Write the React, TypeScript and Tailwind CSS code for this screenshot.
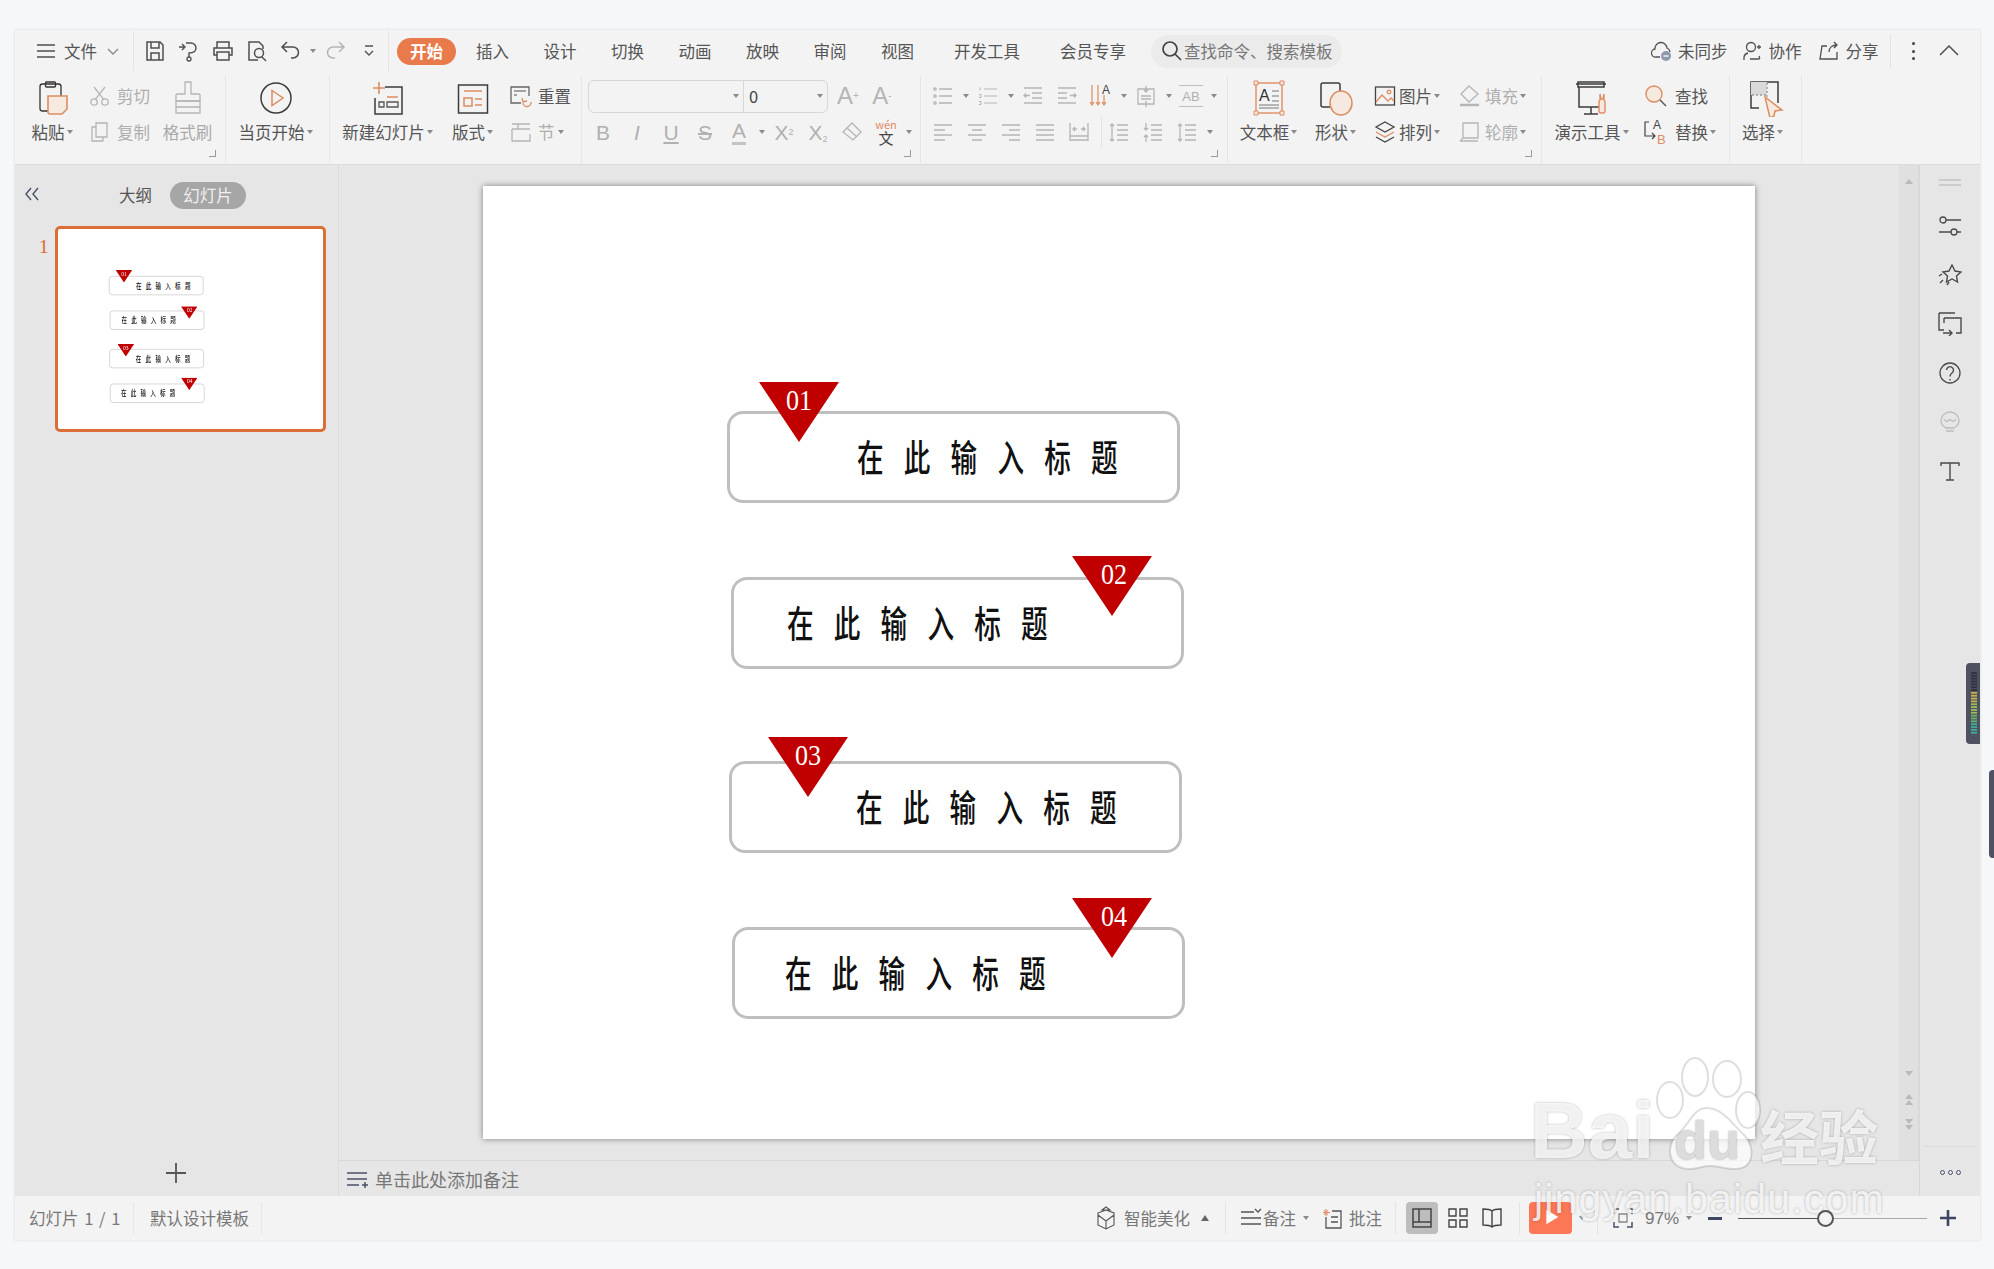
import React from 'react';
import clsx from 'clsx';

const dark = '#4f4f4f';
const org = '#dd8d62';
const dis = '#b5b5b5';
const slate = '#4a5068';

function Ic({ s = 20, h, c = dark, sw = 1.3, children }: { s?: number; h?: number; c?: string; sw?: number; children?: React.ReactNode }) {
  return (
    <svg width={s} height={h ?? s} viewBox={`0 0 ${s} ${h ?? s}`} fill="none" stroke={c} strokeWidth={sw} className="shrink-0">
      {children}
    </svg>
  );
}

function Caret({ className }: { className?: string }) {
  return (
    <span className={clsx('flex w-[8px] shrink-0 justify-center', className)}>
      <span className="h-0 w-0 border-x-[3.5px] border-t-[4px] border-x-transparent border-t-[#8a8a8a]" />
    </span>
  );
}

function Box({ w = 'w-[34px]', children }: { w?: string; children?: React.ReactNode }) {
  return <div className={clsx('flex h-full shrink-0 items-center justify-center', w)}>{children}</div>;
}

function Corner() {
  return <div className="absolute bottom-[6px] right-[9px] h-[7px] w-[7px] border-b border-r border-[#9a9a9a]" />;
}

function Row({ className, children }: { className?: string; children?: React.ReactNode }) {
  return <div className={clsx('flex h-[36px] items-center', className)}>{children}</div>;
}

// big ribbon button: drawing above, label below
function Big({ className, icon, label, caret, dim }: { className: string; icon: React.ReactNode; label: string; caret?: boolean; dim?: boolean }) {
  return (
    <div className={clsx('shrink-0', className)}>
      <Row className="justify-center pt-[3px]">{icon}</Row>
      <Row className={clsx('justify-center', dim && 'text-[#a9a9a9]')}>
        <Lbl text={label} caret={caret} />
      </Row>
    </div>
  );
}

function Group({ w, children }: { w: string; children?: React.ReactNode }) {
  return <div className={clsx('relative flex h-[87px] shrink-0 border-r border-[#e6e6e6] pt-[2px]', w)}>{children}</div>;
}

function Lbl({ text, caret }: { text: string; caret?: boolean }) {
  return (
    <span className="flex items-center whitespace-nowrap">
      {text}
      {caret && <Caret className="ml-[1px]" />}
    </span>
  );
}

/* ---------- ribbon drawings ---------- */
const PasteIcon = () => (
  <Ic s={36}>
    <rect x="5" y="4" width="21" height="27" rx="2.5" stroke="#333" />
    <rect x="10.5" y="2" width="10" height="5" rx="1" stroke="#333" />
    <path d="M13 16h19v13l-5 5H15a2 2 0 0 1-2-2z" fill="#f6e9df" stroke={org} strokeWidth="1.6" />
  </Ic>
);
const ScissorIcon = () => (
  <Ic s={22} c={dis}>
    <circle cx="5" cy="17" r="3.2" />
    <circle cx="16" cy="17" r="3.2" />
    <path d="M6.5 14.2 16 2M14.5 14.2 5 2" />
  </Ic>
);
const CopyIcon = () => (
  <Ic s={22} c={dis}>
    <path d="M7 2h11v14H7zM7 6H3v14h11v-4" />
  </Ic>
);
const BrushIcon = () => (
  <Ic s={30} h={36} c={dis}>
    <path d="M12 2h6v12h8a1 1 0 0 1 1 1v6H3v-6a1 1 0 0 1 1-1h8z" />
    <path d="M3 21h24v12H3zM3 27h24" />
  </Ic>
);
const PlayIcon = () => (
  <Ic s={34}>
    <circle cx="17" cy="17" r="15" stroke="#3c3c3c" strokeWidth="1.5" />
    <path d="M13 9.5 24 17l-11 7.5z" stroke={org} strokeWidth="1.5" />
  </Ic>
);
const NewSlideIcon = () => (
  <Ic s={34}>
    <path d="M14 6h17v27H4V17" stroke="#3c3c3c" strokeWidth="1.5" />
    <path d="M8 1v12M2 7h12M16 16h11" stroke={org} strokeWidth="1.6" />
    <path d="M8 21h5v5H8zM16 21h11v5H16z" stroke="#555" />
  </Ic>
);
const LayoutIcon = () => (
  <Ic s={32}>
    <rect x="1.5" y="3" width="29" height="28" stroke="#3c3c3c" strokeWidth="1.5" />
    <path d="M7 9h18M7 16h8v8H7zM18 17h7M18 23h7" stroke={org} strokeWidth="1.5" />
  </Ic>
);
const ResetIcon = () => (
  <Ic s={24}>
    <path d="M12 19H2V3h18v9" stroke="#666" />
    <path d="M5 7h12M5 11h3" stroke="#888" />
    <path d="M22 18a4 4 0 0 1-8 1M13 14l1 4 4-1" stroke={org} />
  </Ic>
);
const SectionIcon = () => (
  <Ic s={22} c={dis}>
    <path d="M2 3h18M2 8h18M2 8v12h18V13M8 3v5" />
  </Ic>
);
const TextBoxIcon = () => (
  <svg width="32" height="36" viewBox="0 0 32 36" fill="none" className="shrink-0">
    <rect x="3" y="3" width="26" height="30" stroke={org} strokeWidth="1.4" />
    <path d="M1 1h4v4H1zM27 1h4v4h-4zM1 31h4v4H1zM27 31h4v4h-4z" fill="#f6e9df" stroke={org} />
    <text x="6" y="21" fontSize="16" fill="#333" fontFamily="Liberation Sans">A</text>
    <path d="M19 11h7M19 16h7M19 21h7M6 25h20M6 28h20" stroke="#777" />
  </svg>
);
const ShapeIcon = () => (
  <Ic s={36}>
    <path d="M13 27H5a2 2 0 0 1-2-2V5a2 2 0 0 1 2-2h15a2 2 0 0 1 2 2v7" stroke="#3c3c3c" strokeWidth="1.5" />
    <ellipse cx="23" cy="23" rx="11" ry="12" fill="#f6e9df" stroke={org} strokeWidth="1.5" />
  </Ic>
);
const PictureIcon = () => (
  <Ic s={22}>
    <rect x="1.5" y="2" width="19" height="18" stroke="#444" />
    <path d="M2 17 8 10l6 6 3-3 3 3" stroke={org} />
    <circle cx="15" cy="7" r="1.8" stroke={org} />
  </Ic>
);
const FillIcon = () => (
  <Ic s={22} c={dis}>
    <path d="M11 1 20 9l-9 8-8-8z" />
    <path d="M2 20h19" strokeWidth="2.5" />
  </Ic>
);
const LayersIcon = () => (
  <Ic s={22}>
    <path d="M11 1 20 6l-9 5-9-5z" stroke="#444" />
    <path d="m2 11 9 5 9-5" stroke={org} />
    <path d="m2 16 9 5 9-5" stroke="#444" />
  </Ic>
);
const OutlineIcon = () => (
  <Ic s={22} c={dis}>
    <path d="M5 2h15v15H5zM2 20h18M5 17l-3 3" />
  </Ic>
);
const ProjectorIcon = () => (
  <Ic s={36}>
    <path d="M2 4h30M4 2h26v5H4zM5 7v20h20M17 27v7M10 34h14" stroke="#3c3c3c" strokeWidth="1.5" />
    <path d="M26 14v6a3 3 0 0 0-1 2v9a2 2 0 0 0 2 2h2a2 2 0 0 0 2-2v-9a3 3 0 0 0-1-2v-6l-1 5h-2z" stroke={org} fill="#f6e9df" strokeWidth="1.4" />
  </Ic>
);
const FindIcon = () => (
  <Ic s={24}>
    <circle cx="10" cy="10" r="8" fill="#f6e9df" stroke={org} strokeWidth="1.4" />
    <path d="m16 16 6 6" stroke="#555" strokeWidth="1.4" />
  </Ic>
);
const ReplaceIcon = () => (
  <svg width="24" height="26" viewBox="0 0 24 26" fill="none" className="shrink-0">
    <text x="9" y="10" fontSize="12" fill="#444" fontFamily="Liberation Sans">A</text>
    <text x="13" y="25" fontSize="13" fill={org} fontFamily="Liberation Sans">B</text>
    <path d="M5 3H1v14h10m-3-3 3 3-3 3" stroke="#444" strokeWidth="1.2" />
  </svg>
);
const SelectIcon = () => (
  <span className="ml-[8px]">
    <Ic s={38}>
      <path d="M30 24V3H3v26h8" stroke="#3c3c3c" strokeWidth="1.5" />
      <path d="M3 3h16v13H3z" fill="#d9d9d9" stroke="none" />
      <path d="M19 4v14M4 16h14" stroke="#999" strokeDasharray="2 2" />
      <path d="m17 18 17 13-7 1-1 5-4 2z" fill="#f6e9df" stroke={org} strokeWidth="1.5" />
    </Ic>
  </span>
);

const lines = (d: string) => (
  <Ic s={22} c={dis}>
    <path d={d} />
  </Ic>
);

const BulletIcon = () => (
  <Ic s={22} c={dis}>
    <path d="M7 4h13M7 11h13M7 18h13" />
    <circle cx="3" cy="4" r="1.2" />
    <circle cx="3" cy="11" r="1.2" />
    <circle cx="3" cy="18" r="1.2" />
  </Ic>
);
const NumberIcon = () => (
  <Ic s={22} c={dis}>
    <path d="M7 4h13M7 11h13M7 18h13M3 2.5v3M2 9.5h2v3H2M2 16.5h2v3H2" strokeWidth="1" />
  </Ic>
);
const SortIcon = () => (
  <svg width="24" height="26" viewBox="0 0 24 26" fill="none" className="shrink-0">
    <path d="M3 2v20m-2-3 2 3 2-3M9 2v20m-2-3 2 3 2-3M15 12v10m-2-3 2 3 2-3" stroke={org} strokeWidth="1.2" />
    <text x="13" y="11" fontSize="12" fill="#444" fontFamily="Liberation Sans">A</text>
  </svg>
);

/* ---------- slide ---------- */
const cards = [
  { n: '01', box: 'left-[244px] top-[225px]', tri: 'left-[276px] top-[196px]', text: 'left-[127px]', num: 'pl-0' },
  { n: '02', box: 'left-[248px] top-[391px]', tri: 'left-[589px] top-[370px]', text: 'left-[53px]', num: 'pl-[4px]' },
  { n: '03', box: 'left-[246px] top-[575px]', tri: 'left-[285px] top-[551px]', text: 'left-[124px]', num: 'pl-0' },
  { n: '04', box: 'left-[249px] top-[741px]', tri: 'left-[589px] top-[712px]', text: 'left-[50px]', num: 'pl-[4px]' },
];

function SlideCards() {
  return (
    <>
      {cards.map((c) => (
        <React.Fragment key={c.n}>
          <div className={clsx('absolute h-[92px] w-[453px] rounded-[16px] border-[3px] border-[#bfbfbf] bg-white', c.box)}>
            <span
              className={clsx(
                "absolute top-[17px] origin-left scale-x-[0.72] whitespace-nowrap text-[37px] font-medium leading-[50px] tracking-[28px] text-[#111] font-['Noto_Sans_CJK_SC',sans-serif]",
                c.text,
              )}
            >
              在此输入标题
            </span>
          </div>
          <div
            className={clsx(
              "absolute flex h-[60px] w-[80px] justify-center bg-[#c00000] text-[30px] leading-[36px] text-white [clip-path:polygon(0_0,100%_0,50%_100%)] font-['Liberation_Serif',serif]",
              c.tri,
              c.num,
            )}
          >
            <span className="inline-block scale-x-[0.87]">{c.n}</span>
          </div>
        </React.Fragment>
      ))}
    </>
  );
}

function Watermark() {
  const glow = 'text-white/80 [text-shadow:0_0_3px_rgba(0,0,0,0.28)]';
  return (
    <div className="pointer-events-none absolute left-[1530px] top-[1050px] h-[170px] w-[360px]">
      <span className={clsx("absolute left-0 top-[36px] text-[80px] font-bold leading-[90px] font-['Liberation_Sans',sans-serif]", glow)}>Bai</span>
      <svg width="110" height="125" viewBox="0 0 110 125" className="absolute left-[125px] top-[3px]" fill="rgba(255,255,255,0.7)" stroke="rgba(0,0,0,0.13)" strokeWidth="2">
        <ellipse cx="15" cy="47" rx="13" ry="18" />
        <ellipse cx="40" cy="24" rx="13" ry="19" />
        <ellipse cx="72" cy="26" rx="14" ry="18" />
        <ellipse cx="93" cy="57" rx="12" ry="18" />
        <path d="M52 55c-14 0-17 16-30 27-12 11-9 34 12 34 9 0 13-3 21-3s16 3 25 3c20 0 20-22 10-33C78 72 68 55 52 55z" />
      </svg>
      <span className="absolute left-[144px] top-[62px] text-[54px] font-bold leading-[56px] text-[#dcdcdc] [text-shadow:0_0_2px_rgba(0,0,0,0.35)] font-['Liberation_Sans',sans-serif]">du</span>
      <span className={clsx("absolute left-[230px] top-[50px] text-[59px] font-bold leading-[70px] font-['Noto_Sans_CJK_SC',sans-serif]", glow)}>经验</span>
      <span className={clsx("absolute left-[4px] top-[126px] text-[41px] leading-[46px] tracking-[1.2px] font-['Liberation_Sans',sans-serif]", glow)}>jingyan.baidu.com</span>
    </div>
  );
}

function RailIcon({ children }: { children: React.ReactNode }) {
  return <div className="flex h-[49px] items-center justify-center">{children}</div>;
}

function Divider({ className }: { className?: string }) {
  return <div className={clsx('w-px shrink-0 bg-[#e4e4e4]', className)} />;
}

export default function App() {
  return (
    <div className="relative h-[1269px] w-[1994px] overflow-hidden whitespace-nowrap bg-[#f6f7f9] pl-[15px] pt-[30px] text-[16.5px] leading-none text-[#555] font-['Noto_Sans_CJK_SC','Liberation_Sans',sans-serif]">
      <div className="flex h-[1210px] w-[1965px] flex-col shadow-[0_0_3px_rgba(0,0,0,0.12)]">
        {/* title row with the tabs */}
        <div className="flex h-[46px] shrink-0 items-center bg-[#f3f3f3] pb-[4px]">
          <div className="flex w-[118px] shrink-0 items-center pl-[21px]">
            <Ic s={20}>
              <path d="M1 4h18M1 10h18M1 16h18" strokeWidth="1.5" />
            </Ic>
            <span className="ml-[8px]">文件</span>
            <span className="ml-[10px]">
              <Ic s={12} c="#888">
                <path d="m1 4 5 5 5-5" />
              </Ic>
            </span>
          </div>
          <Divider className="h-[40px]" />
          <div className="ml-[4px] flex h-[34px] items-center">
            <Box>
              <Ic s={22}>
                <path d="M3 2h13l3 3v15H3zM7 2v6h8V2M7 20v-7h8v7" strokeWidth="1.5" />
              </Ic>
            </Box>
            <Box>
              <Ic s={22}>
                <path d="M8 3h5a5 5 0 0 1 5 5c0 4-4 5-7 5v4M1 7h5m-2-3 3 3-3 3" strokeWidth="1.4" />
                <circle cx="11" cy="19" r="2" />
              </Ic>
            </Box>
            <Box>
              <Ic s={22}>
                <path d="M5 8V2h12v6M5 15H2V8h18v7h-3M5 12h12v8H5z" strokeWidth="1.5" />
              </Ic>
            </Box>
            <Box>
              <Ic s={22}>
                <path d="M12 20H3V2h10l4 4v3" strokeWidth="1.5" />
                <circle cx="13" cy="13" r="4.5" strokeWidth="1.5" />
                <path d="m16 17 4 4" strokeWidth="1.5" />
              </Ic>
            </Box>
            <Box>
              <Ic s={22}>
                <path d="M7 2 2 7l5 5M2 7h11a5 5 0 0 1 0 11h-2" strokeWidth="1.5" />
              </Ic>
            </Box>
            <Caret className="w-[10px]" />
            <Box>
              <Ic s={22} c={dis}>
                <path d="m15 2 5 5-5 5M20 7H9a5 5 0 0 0 0 11h2" strokeWidth="1.5" />
              </Ic>
            </Box>
            <Box>
              <Ic s={14} c="#555">
                <path d="M3 2h8M3 7l4 4 4-4" strokeWidth="1.4" />
              </Ic>
            </Box>
          </div>
          <Divider className="ml-[2px] h-[40px]" />
          <div className="ml-[8px] flex h-[27px] w-[59px] shrink-0 items-center justify-center rounded-full bg-[#e87a4b] font-bold text-white">开始</div>
          <span className="ml-[20px]">插入</span>
          <span className="ml-[34.5px]">设计</span>
          <span className="ml-[34.5px]">切换</span>
          <span className="ml-[34.5px]">动画</span>
          <span className="ml-[34.5px]">放映</span>
          <span className="ml-[34.5px]">审阅</span>
          <span className="ml-[34.5px]">视图</span>
          <span className="ml-[40px]">开发工具</span>
          <span className="ml-[40px]">会员专享</span>
          <div className="ml-[25px] flex h-[33px] w-[191px] shrink-0 items-center rounded-full bg-[#ebebeb] pl-[10px] text-[#777]">
            <Ic s={22} c="#444">
              <circle cx="9" cy="9" r="7" strokeWidth="1.7" />
              <path d="m14 14 6 6" strokeWidth="1.7" />
            </Ic>
            <span className="ml-[1px] whitespace-nowrap text-[16.5px]">查找命令、搜索模板</span>
          </div>
          <div className="ml-[309px] flex items-center">
            <Ic s={22}>
              <path d="M9 17H5a4 4 0 0 1-1-8 6 6 0 0 1 12-1 5 5 0 0 1 3 4" />
              <circle cx="15" cy="16" r="5" fill="#8f99ad" stroke="none" />
              <path d="M12.5 16h5" stroke="#fff" />
            </Ic>
            <span className="ml-[5px]">未同步</span>
            <span className="ml-[14px]">
              <Ic s={20}>
                <circle cx="9" cy="6" r="4.5" />
                <path d="M2 19v-3a5 5 0 0 1 4-4M8 18h8c2 0 2-1 1-3M15 6h4M17 4v4" />
              </Ic>
            </span>
            <span className="ml-[7px]">协作</span>
            <span className="ml-[16px]">
              <Ic s={22}>
                <path d="M9 6H4L2 19h17V12M11 12c0-4 3-7 8-7m-3-3 3 3-3 3" />
              </Ic>
            </span>
            <span className="ml-[6px]">分享</span>
            <Divider className="ml-[11px] h-[34px]" />
            <div className="ml-[20px] flex h-[22px] w-[6px] flex-col items-center justify-between py-[2px]">
              <span className="h-[3px] w-[3px] rounded-full bg-[#444]" />
              <span className="h-[3px] w-[3px] rounded-full bg-[#444]" />
              <span className="h-[3px] w-[3px] rounded-full bg-[#444]" />
            </div>
            <span className="ml-[22px]">
              <Ic s={20}>
                <path d="m1 14 9-9 9 9" strokeWidth="1.5" />
              </Ic>
            </span>
          </div>
        </div>

        {/* ribbon */}
        <div className="flex h-[89px] shrink-0 border-b border-[#dcdcdc] bg-[#f3f3f3] text-[#555]">
          <Group w="w-[211px]">
            <Big className="ml-[11px] w-[53px]" icon={<PasteIcon />} label="粘贴" caret />
            <div className="ml-[8px] w-[73px] shrink-0 text-[#aeaeae]">
              <Row><Box w="w-[26px]"><ScissorIcon /></Box><span className="ml-[4px]">剪切</span></Row>
              <Row><Box w="w-[26px]"><CopyIcon /></Box><span className="ml-[4px]">复制</span></Row>
            </div>
            <Big className="ml-[3px] w-[49px]" icon={<BrushIcon />} label="格式刷" dim />
            <Corner />
          </Group>

          <Group w="w-[104px]">
            <Big className="ml-[12px] w-[76px]" icon={<PlayIcon />} label="当页开始" caret />
          </Group>

          <Group w="w-[252px]">
            <Big className="ml-[12px] w-[92px]" icon={<NewSlideIcon />} label="新建幻灯片" caret />
            <Big className="ml-[18px] w-[42px]" icon={<LayoutIcon />} label="版式" caret />
            <div className="ml-[16px] shrink-0">
              <Row><Box w="w-[22px]"><ResetIcon /></Box><span className="ml-[6px]">重置</span></Row>
              <Row className="text-[#aeaeae]"><Box w="w-[22px]"><SectionIcon /></Box><span className="ml-[6px]">节</span><Caret className="ml-[2px]" /></Row>
            </div>
          </Group>

          <Group w="w-[339px]">
            <div className="shrink-0">
              <Row className="pl-[6px]">
                <div className="flex h-[33px] w-[240px] overflow-hidden rounded-[6px] border border-[#d6d6d6]">
                  <div className="flex w-[155px] items-center justify-end border-r border-[#d6d6d6] pr-[3px]"><Caret /></div>
                  <div className="flex flex-1 items-center justify-between pl-[5px] pr-[3px] text-[#444]">0<Caret /></div>
                </div>
                <div className="ml-[3px] flex h-full text-[24px] text-[#b5b5b5] font-['Liberation_Sans',sans-serif]">
                  <Box><span>A<sup className="text-[10px]">+</sup></span></Box>
                  <Box><span>A<sup className="text-[10px]">-</sup></span></Box>
                </div>
              </Row>
              <Row className="pl-[4px] text-[21px] text-[#b0b0b0] font-['Liberation_Sans',sans-serif]">
                <Box>B</Box>
                <Box><span className="italic">I</span></Box>
                <Box><span className="underline underline-offset-2">U</span></Box>
                <Box><span className="line-through">S</span></Box>
                <Box><span className="border-b-[3px] border-[#c4c4c4] pb-[1px]">A</span></Box>
                <Caret className="w-[11px]" />
                <Box><span>X<sup className="text-[9px]">2</sup></span></Box>
                <Box><span>X<sub className="text-[9px]">2</sub></span></Box>
                <Box>
                  <Ic s={24} c={dis}>
                    <path d="m12 3 9 9-8 8-10-8zM7 8l10 9" fill="#f3f3f3" />
                  </Ic>
                </Box>
                <Box>
                  <span className="flex flex-col items-center font-['Noto_Sans_CJK_SC',sans-serif]">
                    <span className="text-[11px] leading-[11px] text-[#dd8d62]">wén</span>
                    <span className="text-[15px] leading-[15px] text-[#444]">文</span>
                  </span>
                </Box>
                <Caret className="w-[11px]" />
              </Row>
            </div>
            <Corner />
          </Group>

          <Group w="w-[307px]">
            <div className="shrink-0">
              <Row className="pl-[5px]">
                <Box><BulletIcon /></Box><Caret className="w-[11px]" />
                <Box><NumberIcon /></Box><Caret className="w-[11px]" />
                <Box>{lines('M2 3h18M10 8h10M10 13h10M2 18h18M8 10.5H2m2-2-2 2 2 2')}</Box>
                <Box>{lines('M2 3h18M2 8h9M2 13h9M2 18h18M14 10.5h6m-2-2 2 2-2 2')}</Box>
                <Box><SortIcon /></Box><Caret className="w-[11px]" />
                <Box>{lines('M3 4h16v15H3zM6 11h10M6 14h10M11 1v6m-2-2 2 2 2-2M11 22v-6')}</Box><Caret className="w-[11px]" />
                <Box>
                  <span className="flex h-[22px] w-[24px] flex-col items-center justify-center border-y border-[#bdbdbd] text-[13px] text-[#b0b0b0] font-['Liberation_Sans',sans-serif]">AB</span>
                </Box>
                <Caret className="w-[11px]" />
              </Row>
              <Row className="pl-[5px]">
                <Box>{lines('M2 4h18M2 9h11M2 14h18M2 19h11')}</Box>
                <Box>{lines('M2 4h18M6 9h10M2 14h18M6 19h10')}</Box>
                <Box>{lines('M2 4h18M9 9h11M2 14h18M9 19h11')}</Box>
                <Box>{lines('M2 4h18M2 9h18M2 14h18M2 19h18')}</Box>
                <Box>{lines('M2 2v18M20 2v18M2 15h18M2 19h18M5 8h4m-2-2-2 2 2 2M17 8h-4m2-2 2 2-2 2')}</Box>
                <Divider className="ml-[5px] h-[30px] bg-[#dedede]" />
                <Box>{lines('M9 4h11M9 9h11M9 14h11M9 19h11M4 3v17M2 5l2-2 2 2M2 18l2 2 2-2')}</Box>
                <Box>{lines('M9 4h11M9 9h11M9 14h11M9 19h11M4 2v7M4 14v7M2 7l2 2 2-2M2 16l2-2 2 2')}</Box>
                <Box>{lines('M9 4h11M9 9h11M9 14h11M9 19h11M4 3v17M2 5l2-2 2 2M2 18l2 2 2-2')}</Box>
                <Caret className="w-[11px]" />
              </Row>
            </div>
            <Corner />
          </Group>

          <Group w="w-[314px]">
            <Big className="ml-[12px] w-[58px]" icon={<TextBoxIcon />} label="文本框" caret />
            <Big className="ml-[17px] w-[42px]" icon={<ShapeIcon />} label="形状" caret />
            <div className="ml-[17px] w-[84px] shrink-0">
              <Row><Box w="w-[22px]"><PictureIcon /></Box><span className="ml-[3px]"><Lbl text="图片" caret /></span></Row>
              <Row><Box w="w-[22px]"><LayersIcon /></Box><span className="ml-[3px]"><Lbl text="排列" caret /></span></Row>
            </div>
            <div className="text-[#aeaeae]">
              <Row><Box w="w-[22px]"><FillIcon /></Box><span className="ml-[5px]"><Lbl text="填充" caret /></span></Row>
              <Row><Box w="w-[22px]"><OutlineIcon /></Box><span className="ml-[5px]"><Lbl text="轮廓" caret /></span></Row>
            </div>
            <Corner />
          </Group>

          <Group w="w-[188px]">
            <Big className="ml-[11px] w-[78px]" icon={<ProjectorIcon />} label="演示工具" caret />
            <div className="ml-[13px] shrink-0">
              <Row><Box w="w-[24px]"><FindIcon /></Box><span className="ml-[7px]">查找</span></Row>
              <Row><Box w="w-[24px]"><ReplaceIcon /></Box><span className="ml-[7px]"><Lbl text="替换" caret /></span></Row>
            </div>
          </Group>

          <Group w="w-[72px]">
            <Big className="ml-[12px] w-[42px]" icon={<SelectIcon />} label="选择" caret />
          </Group>
        </div>

        {/* workspace */}
        <div className="flex min-h-0 flex-1 bg-[#e6e6e6]">
          <div className="flex w-[324px] shrink-0 flex-col border-r border-[#dcdcdc]">
            <div className="relative flex h-[61px] shrink-0 items-start pt-[17px]">
              <span className="absolute left-[9px] top-[21px]">
                <Ic s={16} c="#4a5068">
                  <path d="M7 2 2 8l5 6M14 2 9 8l5 6" strokeWidth="1.4" />
                </Ic>
              </span>
              <span className="ml-[104px] flex h-[27px] items-center text-[#555]">大纲</span>
              <div className="ml-[18px] flex h-[27px] w-[76px] items-center justify-center rounded-full bg-[#a6a6a6] text-[#f0f0f0]">幻灯片</div>
            </div>
            <div className="flex flex-1 pt-0">
              <span className="ml-[24px] mt-[11px] w-[16px] text-[19px] text-[#d9692e] font-['Liberation_Serif',serif]">1</span>
              <div className="relative h-[206px] w-[271px] overflow-hidden rounded-[5px] border-[3px] border-[#dc6f36] bg-white">
                <div className="absolute left-0 top-0 h-[953px] w-[1272px] origin-top-left scale-[0.2087]">
                  <SlideCards />
                </div>
              </div>
            </div>
            <div className="flex h-[47px] shrink-0 items-end justify-center pb-[12px] pr-[2px]">
              <Ic s={22} c="#555">
                <path d="M11 1v20M1 11h20" strokeWidth="1.8" />
              </Ic>
            </div>
          </div>

          <div className="flex min-w-0 flex-1 flex-col">
            <div className="flex min-h-0 flex-1">
              <div className="min-w-0 flex-1 pl-[144px] pt-[21px]">
                <div className="relative h-[953px] w-[1272px] bg-white shadow-[0_0_6px_rgba(0,0,0,0.45)]">
                  <SlideCards />
                </div>
              </div>
              <div className="flex w-[20px] shrink-0 flex-col items-center border-r border-[#d8d8d8] bg-[#e0e0e0] pt-[14px]">
                <span className="h-0 w-0 border-x-[4px] border-b-[5px] border-x-transparent border-b-[#b9b9b9]" />
                <span className="mt-auto h-0 w-0 border-x-[4px] border-t-[5px] border-x-transparent border-t-[#b9b9b9]" />
                <span className="mt-[18px] flex flex-col gap-[1px]">
                  <span className="h-0 w-0 border-x-[4px] border-b-[5px] border-x-transparent border-b-[#b9b9b9]" />
                  <span className="h-0 w-0 border-x-[4px] border-b-[5px] border-x-transparent border-b-[#b9b9b9]" />
                </span>
                <span className="mb-[30px] mt-[14px] flex flex-col gap-[1px]">
                  <span className="h-0 w-0 border-x-[4px] border-t-[5px] border-x-transparent border-t-[#b9b9b9]" />
                  <span className="h-0 w-0 border-x-[4px] border-t-[5px] border-x-transparent border-t-[#b9b9b9]" />
                </span>
              </div>
            </div>
            <div className="flex h-[36px] shrink-0 items-center border-t border-[#d8d8d8] pl-[7px] text-[18px] text-[#777]">
              <Ic s={22} c={slate}>
                <path d="M1 5h20M1 11h20M1 17h12M16 17h6M19 14v6" strokeWidth="1.5" />
              </Ic>
              <span className="ml-[7px]">单击此处添加备注</span>
            </div>
          </div>

          <div className="flex w-[61px] shrink-0 flex-col items-center border-l border-[#d8d8d8]">
            <div className="flex h-[36px] items-center">
              <Ic s={22} c="#c4c4c4">
                <path d="M0 8h22M0 13h22" strokeWidth="1.5" />
              </Ic>
            </div>
            <RailIcon>
              <Ic s={24} c="#4a4a4a">
                <circle cx="5" cy="6" r="3" />
                <circle cx="16" cy="18" r="3" />
                <path d="M8 6h15M1 18h12M19 18h4" />
              </Ic>
            </RailIcon>
            <RailIcon>
              <Ic s={24} c="#4a4a4a">
                <path d="m14 2 3 6 6 1-4.500 4 1 6-5.500-3-5.500 3 1-6L5 9l6-1z" strokeWidth="1.4" />
                <path d="m1 13 3-2M2 20l3-3M9 22l2-3" strokeWidth="1.4" />
              </Ic>
            </RailIcon>
            <RailIcon>
              <Ic s={24} c="#4a4a4a">
                <path d="M1 1h16M1 1v17h5M6 6h17v15h-5M6 6v5M5 21h9m-3-3 3 3-3 3" strokeWidth="1.4" />
              </Ic>
            </RailIcon>
            <RailIcon>
              <Ic s={22} c="#4a4a4a">
                <circle cx="11" cy="11" r="10" />
                <path d="M7.500 8a3.500 3.500 0 1 1 5.500 3c-1.500 1-2 2-2 3.500M11 17v1.500" strokeWidth="1.4" />
              </Ic>
            </RailIcon>
            <RailIcon>
              <Ic s={22} c="#bcbcbc">
                <path d="M7 17C4 15 2 13 2 10a9 9 0 0 1 18 0c0 3-2 5-5 7zM7 20h8M5 8.500l3 2 3-2 3 2 3-2" strokeWidth="1.3" />
              </Ic>
            </RailIcon>
            <RailIcon>
              <Ic s={22} c="#4a4a4a">
                <path d="M2 6V3h18v3M11 3v17M7 20h8" strokeWidth="1.4" />
              </Ic>
            </RailIcon>
            <div className="mx-[3px] mt-auto h-px w-[52px] bg-[#dcdcdc]" />
            <div className="mb-[21px] mt-[23px] flex gap-[3px]">
              <span className="h-[5px] w-[5px] rounded-full border border-[#4a5068]" />
              <span className="h-[5px] w-[5px] rounded-full border border-[#4a5068]" />
              <span className="h-[5px] w-[5px] rounded-full border border-[#4a5068]" />
            </div>
          </div>
        </div>

        {/* status bar */}
        <div className="flex h-[44px] shrink-0 items-center bg-[#f3f3f3] text-[16.5px] text-[#777]">
          <div className="flex h-[32px] w-[119px] shrink-0 items-center border-r border-[#e6e6e6] pl-[14px] [word-spacing:2px]">幻灯片 1 / 1</div>
          <div className="flex h-[32px] w-[128px] shrink-0 items-center border-r border-[#e6e6e6] pl-[16px]">默认设计模板</div>
          <span className="ml-[835px]">
            <Ic s={18} h={24} c="#555">
              <path d="M9 1 5 4h8zM1 7l8-3 8 3v12l-8 4-8-4zM1 9l8 6 8-6M9 15v8" strokeWidth="1.1" />
            </Ic>
          </span>
          <span className="ml-[9px]">智能美化</span>
          <span className="ml-[11px] h-0 w-0 border-x-[4px] border-b-[6px] border-x-transparent border-b-[#666]" />
          <Divider className="ml-[16px] h-[32px]" />
          <span className="ml-[14px]">
            <Ic s={22} c="#555">
              <path d="M1 5h13M1 11h20M1 17h20M15 2l3 3 3-3" strokeWidth="1.4" />
            </Ic>
          </span>
          <span className="ml-[1px]">备注</span>
          <Caret className="ml-[6px]" />
          <span className="ml-[12px]">
            <Ic s={21} c="#555">
              <path d="M4 9v11h15V3h-9M9 9h7M9 14h7" strokeWidth="1.3" />
              <path d="M4 1v7M1 4.500h7M2 2l4 5M6 2 2 7" stroke={org} strokeWidth="1" />
            </Ic>
          </span>
          <span className="ml-[6px]">批注</span>
          <Divider className="ml-[13px] h-[32px]" />
          <div className="ml-[10px] flex h-[32px] w-[32px] shrink-0 items-center justify-center rounded-[4px] bg-[#bdbdbd]">
            <Ic s={22} c="#444">
              <path d="M2 2h18v18H2zM8 2v13M2 15h18" strokeWidth="1.5" />
            </Ic>
          </div>
          <div className="ml-[3px] h-full">
            <Box w="w-[34px]">
              <Ic s={20} c="#444">
                <path d="M1 1h7v7H1zM12 1h7v7h-7zM1 12h7v7H1zM12 12h7v7h-7z" strokeWidth="1.4" />
              </Ic>
            </Box>
          </div>
          <Box w="w-[34px]">
            <Ic s={22} c="#444">
              <path d="M11 4C9 2 5 2 2 2v16c3 0 7 0 9 2 2-2 6-2 9-2V2c-3 0-7 0-9 2zM11 4v16" strokeWidth="1.4" />
            </Ic>
          </Box>
          <Divider className="ml-[10px] h-[32px]" />
          <div className="ml-[9px] flex h-[32px] w-[43px] shrink-0 items-center justify-center rounded-[4px] bg-[#fb7756]">
            <Ic s={20} c="#fff">
              <path d="M6 3v12l10-6z" fill="#fff" />
            </Ic>
          </div>
          <Caret className="ml-[6px]" />
          <Divider className="ml-[11px] h-[32px]" />
          <span className="ml-[15px]">
            <Ic s={20} c={slate}>
              <path d="M1 6V1h5M14 1h5v5M19 14v5h-5M6 19H1v-5" strokeWidth="1.5" />
              <path d="M6 6h8v8H6z" stroke="#888" />
            </Ic>
          </span>
          <span className="ml-[12px] text-[17px] font-['Liberation_Sans',sans-serif]">97%</span>
          <Caret className="ml-[6px]" />
          <span className="ml-[15px] h-[3px] w-[14px] shrink-0 bg-[#3d4663]" />
          <div className="relative ml-[16px] h-px w-[189px] shrink-0 bg-[#a8a8a8]">
            <div className="h-px w-[87px] bg-[#555]" />
            <span className="absolute left-[79px] top-[-8px] h-[17px] w-[17px] rounded-full border-2 border-[#555] bg-[#f3f3f3]" />
          </div>
          <span className="ml-[12px]">
            <Ic s={18} c="#3d4663">
              <path d="M9 1v16M1 9h16" strokeWidth="2.6" />
            </Ic>
          </span>
        </div>
      </div>

      {/* floating desktop widgets at the right edge */}
      <div className="absolute left-[1966px] top-[663px] flex h-[81px] w-[14px] justify-end rounded-l-[4px] bg-[#4d5160] pr-[3px] pt-[9px]">
        <svg width="6" height="62" viewBox="0 0 6 62">
          {Array.from({ length: 22 }).map((_, i) => (
            <rect key={i} x="0" y={i * 2.85} width="6" height="1.8" fill={i < 7 ? '#2f3240' : i < 11 ? '#c7b04f' : i < 15 ? '#9dbb57' : i < 18 ? '#6db36d' : '#3fae96'} />
          ))}
        </svg>
      </div>
      <div className="absolute left-[1989px] top-[770px] h-[88px] w-[5px] rounded-l-[4px] bg-[#4d5160]" />
      <Watermark />
    </div>
  );
}
